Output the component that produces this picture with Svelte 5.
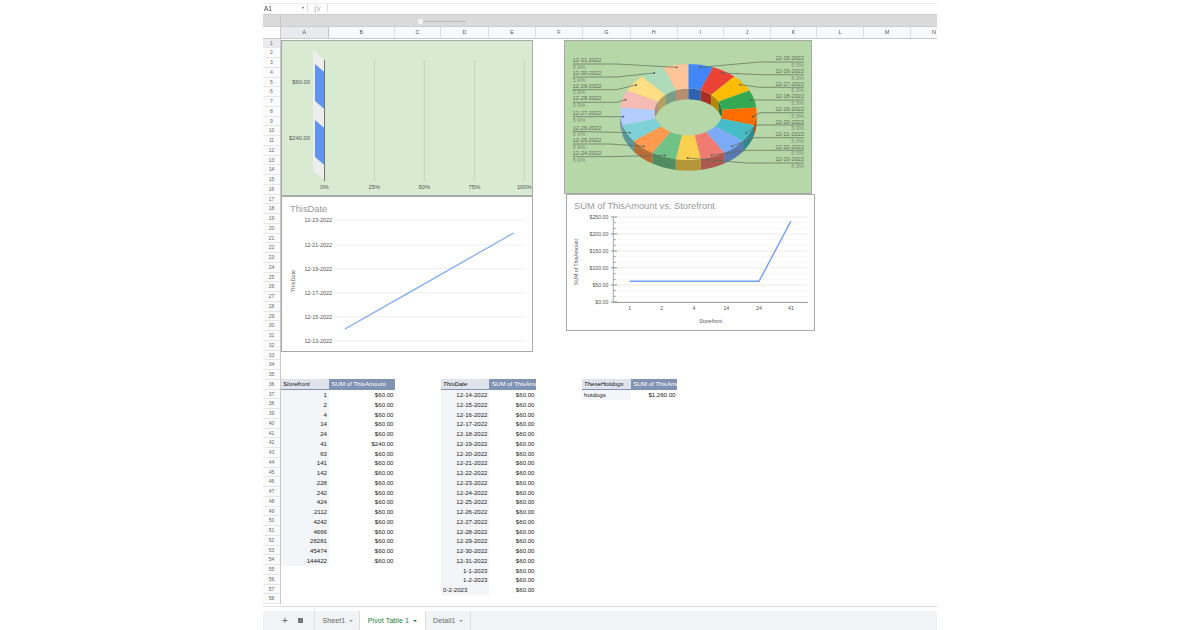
<script>
  const columns = [
    ["A", 47.5], ["B", 66.5], ["C", 46], ["D", 48], ["E", 47], ["F", 47], ["G", 48],
    ["H", 46.5], ["I", 46.5], ["J", 47], ["K", 46], ["L", 47], ["M", 47], ["N", 47],
  ];
  const rowNumbers = Array.from({ length: 58 }, (_, i) => i + 1);

  // pivot tables
  const stores = [1, 2, 4, 14, 24, 41, 63, 141, 142, 228, 242, 424, 2112, 4242, 4666, 28281, 45474, 144422];
  const dates = [];
  for (let d = 14; d <= 31; d++) dates.push(`12-${d}-2022`);
  dates.push("1-1-2023", "1-2-2023", "0-2-2023");

  const tables = [
    {
      head: "Storefront", w1: 47.5, w2: 66.5,
      rows: stores.map((s) => ({ key: s, val: s === 41 ? "$240.00" : "$60.00" })),
    },
    {
      head: "ThisDate", w1: 48, w2: 47,
      rows: dates.map((d) => ({ key: d, val: "$60.00", left: d === "0-2-2023" })),
    },
    {
      head: "TheseHotdogs", w1: 48.5, w2: 46.5,
      rows: [{ key: "hotdogs", val: "$1,260.00", left: true }],
    },
  ];

  // donut chart
  const sliceColors = [
    "#4285f4", "#ea4335", "#fbbc04", "#34a853", "#ff6d01", "#46bdc6", "#7baaf7", "#f07b72", "#fcd04f",
    "#71c287", "#ff994d", "#7ed1d7", "#b3cefb", "#f7bbb6", "#fdde83", "#aedcba", "#ffc599",
  ];
  const cx = 688.3, cy = 112, rx = 68.3, ry = 48, irx = 34, iry = 23.5, depth = 10.7;
  const step = 360 / 17;

  function pt(a, x, y, dy = 0) {
    const r = (a * Math.PI) / 180;
    return `${(cx + x * Math.sin(r)).toFixed(2)} ${(cy + dy - y * Math.cos(r)).toFixed(2)}`;
  }
  function wall(a0, a1, x, y) {
    return `M${pt(a0, x, y)} A${x} ${y} 0 0 1 ${pt(a1, x, y)} L${pt(a1, x, y, depth)} A${x} ${y} 0 0 0 ${pt(a0, x, y, depth)} Z`;
  }
  function darken(hex) {
    const n = parseInt(hex.slice(1), 16);
    const c = [n >> 16, (n >> 8) & 255, n & 255].map((v) => Math.round(v * 0.72));
    return `rgb(${c.join(",")})`;
  }

  const slices = sliceColors.map((color, i) => {
    const a0 = i * step, a1 = (i + 1) * step;
    return {
      color,
      shade: darken(color),
      top: `M${pt(a0, rx, ry)} A${rx} ${ry} 0 0 1 ${pt(a1, rx, ry)} L${pt(a1, irx, iry)} A${irx} ${iry} 0 0 0 ${pt(a0, irx, iry)} Z`,
      outer: a1 > 90 && a0 < 270 ? wall(Math.max(a0, 90), Math.min(a1, 270), rx, ry) : null,
      inner: [
        a0 < 90 ? wall(a0, Math.min(a1, 90), irx, iry) : null,
        a1 > 270 ? wall(Math.max(a0, 270), a1, irx, iry) : null,
      ].filter(Boolean),
    };
  });

  const leftLabels = [
    ["12-31-2022", 60.3, "572.7,64 616.7,64 676.7,67.3"],
    ["12-30-2022", 73, "572.7,77 616.7,77 654.3,73"],
    ["12-29-2022", 85.7, "572.7,89.7 616.7,89.7 636,85"],
    ["12-28-2022", 98.3, "572.7,102.3 616.7,102.3 625.7,99.7"],
    ["12-27-2022", 113, "572.7,116.7 623.3,116.7"],
    ["12-26-2022", 127.7, "572.7,131.3 630,132.7"],
    ["12-25-2022", 140.3, "572.7,144 610,144 644,146.3"],
    ["12-24-2022", 153, "572.7,156.7 610,156.7 665,155.3"],
  ];
  const rightLabels = [
    ["12-15-2022", 58.3, "804,62 760,62 700,67.3"],
    ["12-16-2022", 71, "804,74.7 760,74.7 722.3,73"],
    ["12-17-2022", 83.7, "804,87.3 760,87.3 740,84.7"],
    ["12-18-2022", 96.3, "804,100 750.7,100"],
    ["12-19-2022", 109, "804,112.7 760,112.7 752.7,116.7"],
    ["12-20-2022", 121.7, "804,125 756.7,125 746,133.3"],
    ["12-21-2022", 134.3, "804,137.7 755,137.7 731.7,146.3"],
    ["12-22-2022", 146.7, "804,150.3 746.7,150.3 711.7,155.3"],
    ["12-23-2022", 159.3, "804,163 746.7,163 687.7,158"],
  ];

  // bar chart
  const barGrid = [
    [324.5, "0%"], [374.3, "25%"], [424.3, "50%"], [474.3, "75%"], [524.3, "100%"],
  ];

  // date line chart
  const dateTicks = [
    ["12-23-2022", 220.3], ["12-21-2022", 245], ["12-19-2022", 268.7],
    ["12-17-2022", 292.7], ["12-15-2022", 316.7], ["12-13-2022", 340.7],
  ];

  // amount line chart
  const amountTicks = [
    ["$250.00", 217], ["$200.00", 234], ["$150.00", 251], ["$100.00", 267.8], ["$50.00", 285], ["$0.00", 302],
  ];
  const minorTicks = [];
  for (let i = 0; i < 5; i++) {
    minorTicks.push(217 + i * 17 + 17 / 3, 217 + i * 17 + (2 * 17) / 3);
  }
  const amountCats = [["1", 629.7], ["2", 661.7], ["4", 694], ["14", 726.3], ["24", 759], ["41", 791]];
</script>

<div class="page">
  <div class="sheet">
    <div class="formula">
      <span class="cell-ref">A1</span>
      <span class="caret"></span>
      <span class="sep"></span>
      <span class="fx">fx</span>
      <span class="sep"></span>
    </div>

    <div class="band">
      <div class="band-gutter"></div>
      <div class="band-main">
        <span class="knob"></span>
        <span class="track"></span>
      </div>
    </div>

    <div class="col-head">
      <div class="corner"></div>
      {#each columns as [name, w], i}
        <div class="col" class:active={i === 0} style:width="{w}px">{name}</div>
      {/each}
    </div>

    <div class="body">
      <div class="row-head">
        {#each rowNumbers as n}
          <div class="row-num" class:active={n === 1}>{n}</div>
        {/each}
      </div>

      <div class="canvas">
        <div class="tables">
          {#each tables as t}
            <div class="pivot" style:grid-template-columns="{t.w1}px {t.w2}px">
              <div class="th key">{t.head}</div>
              <div class="th sum">SUM of ThisAmount</div>
              {#each t.rows as r}
                <div class="td key" class:left={r.left}>{r.key}</div>
                <div class="td">{r.val}</div>
              {/each}
            </div>
          {/each}
        </div>

        <!-- charts float over the cells -->
        <svg class="chart bar" viewBox="281 40 252 156">
          <polygon points="313,49.3 324.3,60 324.3,181 313,170" fill="#eeeeee" />
          <polygon points="315,64 324.3,72 324.3,109 315,101" fill="#5f95f0" />
          <polygon points="315,120 324.3,128 324.3,165 315,157" fill="#5f95f0" />
          {#each barGrid as [x, label], i}
            <line x1={x} x2={x} y1="60" y2="181" stroke={i === 0 ? "#666" : "#bfd0b8"} stroke-width="0.9" />
            <text x={x} y="188.5" text-anchor="middle" class="tick">{label}</text>
          {/each}
          <text x="310" y="83.5" text-anchor="end" class="tick">$60.00</text>
          <text x="310" y="139.5" text-anchor="end" class="tick">$240.00</text>
        </svg>

        <svg class="chart donut" viewBox="564 40 248 154">
          <defs>
            <clipPath id="hole">
              <ellipse cx={cx} cy={cy} rx={irx} ry={iry} />
            </clipPath>
          </defs>
          <g clip-path="url(#hole)">
            {#each slices as s}
              {#each s.inner as d}
                <path d={d} fill={s.shade} />
              {/each}
            {/each}
          </g>
          {#each slices as s}
            {#if s.outer}<path d={s.outer} fill={s.shade} />{/if}
          {/each}
          {#each slices as s}
            <path d={s.top} fill={s.color} />
          {/each}

          {#each [...leftLabels, ...rightLabels] as [, , pts]}
            <polyline points={pts} fill="none" stroke="#5f6b5a" stroke-width="0.7" />
            <circle cx={pts.split(" ").at(-1).split(",")[0]} cy={pts.split(" ").at(-1).split(",")[1]} r="0.9" fill="#555" />
          {/each}
          {#each leftLabels as [date, y]}
            <text x="572.7" y={y + 2} class="lab">{date}</text>
            <text x="572.7" y={y + 8.6} class="pct">5.9%</text>
          {/each}
          {#each rightLabels as [date, y]}
            <text x="804" y={y + 2} text-anchor="end" class="lab">{date}</text>
            <text x="804" y={y + 8.6} text-anchor="end" class="pct">5.9%</text>
          {/each}
        </svg>

        <svg class="chart dates" viewBox="281 196 252 156">
          <text x="290" y="212" class="title">ThisDate</text>
          {#each dateTicks as [label, y]}
            <line x1="335" x2="525" y1={y} y2={y} stroke="#eeeeee" />
            <text x="332" y={y + 2} text-anchor="end" class="tick date">{label}</text>
          {/each}
          <line x1="345" y1="329" x2="513.7" y2="233" stroke="#7fadf8" stroke-width="1.4" />
          <text transform="translate(294.5 281) rotate(-90)" text-anchor="middle" class="axis">ThisDate</text>
        </svg>

        <svg class="chart amount" viewBox="566 194 249 137">
          <text x="574" y="209" class="title">SUM of ThisAmount vs. Storefront</text>
          {#each minorTicks as y}
            <line x1="613.3" x2="807.7" y1={y} y2={y} stroke="#f3f3f3" stroke-width="0.7" />
            <line x1="613.3" x2="616" y1={y} y2={y} stroke="#777" stroke-width="0.6" />
          {/each}
          {#each amountTicks as [label, y]}
            <line x1="613.3" x2="807.7" y1={y} y2={y} stroke="#e2e2e2" stroke-width="0.7" />
            <line x1="611" x2="617" y1={y} y2={y} stroke="#666" stroke-width="0.7" />
            <text x="608.3" y={y + 2} text-anchor="end" class="small">{label}</text>
          {/each}
          <line x1="613.3" x2="613.3" y1="217" y2="302" stroke="#888" stroke-width="0.7" />
          <line x1="613.3" x2="807.7" y1="302.5" y2="302.5" stroke="#888" stroke-width="0.8" />
          {#each amountCats as [label, x]}
            <text x={x} y="309.5" text-anchor="middle" class="small">{label}</text>
          {/each}
          <polyline points="629.7,281.3 759,281.3 791,221" fill="none" stroke="#6fa1f5" stroke-width="1.4" />
          <text x="710.7" y="323.3" text-anchor="middle" class="small">Storefront</text>
          <text transform="translate(578 262) rotate(-90)" text-anchor="middle" class="small">SUM of ThisAmount</text>
        </svg>
      </div>
    </div>

    <div class="scroll"></div>

    <div class="tabs">
      <span class="plus">+</span>
      <span class="list"></span>
      <div class="tab first">Sheet1<i></i></div>
      <div class="tab current">Pivot Table 1<i></i></div>
      <div class="tab">Detail1<i></i></div>
    </div>
  </div>
</div>

<style>
  :global(body) {
    background: #fff;
  }

  .page {
    width: 1200px;
    height: 630px;
    display: flex;
    justify-content: center;
    overflow: hidden;
    font-family: "Liberation Sans", Arial, sans-serif;
    color: #222;
  }

  .sheet {
    width: 674px;
    height: 630px;
    padding-top: 3px;
    box-sizing: border-box;
    display: flex;
    flex-direction: column;
    overflow: hidden;
    filter: blur(0.45px);
  }

  .formula {
    height: 11px;
    flex: none;
    border-top: 1px solid #eee;
    padding-bottom: 2px;
    box-sizing: border-box;
    display: flex;
    align-items: center;
    font-size: 6.5px;
  }
  .cell-ref {
    width: 38px;
    padding-left: 1px;
    color: #444;
  }
  .caret {
    border: 1.5px solid transparent;
    border-top: 2px solid #666;
    border-bottom: none;
    margin-right: 3px;
  }
  .sep {
    width: 1px;
    height: 8px;
    background: #ddd;
  }
  .fx {
    width: 19px;
    text-align: center;
    font-family: "Liberation Serif", serif;
    font-style: italic;
    font-size: 9px;
    color: #aaa;
  }

  .band {
    height: 13px;
    flex: none;
    display: flex;
    background: #dadada;
    border-top: 1px solid #ccc;
    box-sizing: border-box;
  }
  .band-gutter {
    width: 18px;
    flex: none;
    border-right: 1px solid #c8c8c8;
    box-sizing: border-box;
  }
  .band-main {
    flex: 1;
    display: flex;
    align-items: center;
    padding-left: 137px;
  }
  .knob {
    width: 5px;
    height: 5px;
    background: #f4f4f4;
    border-radius: 1px;
  }
  .track {
    width: 43px;
    height: 1px;
    background: #bbb;
  }

  .col-head {
    height: 10.6px;
    flex: none;
    display: flex;
    background: #f8f9fa;
    border-top: 1px solid #ccc;
    border-bottom: 1px solid #ccc;
    margin-top: -1px;
    overflow: hidden;
  }
  .corner {
    width: 18px;
    flex: none;
    background: #fff;
    border-right: 1px solid #c8c8c8;
    box-sizing: border-box;
  }
  .col {
    flex: none;
    box-sizing: border-box;
    border-right: 1px solid #ddd;
    font-size: 5.5px;
    line-height: 10.6px;
    text-align: center;
    color: #555;
  }
  .col.active {
    background: #e8eaed;
    border-right-color: #c4c4c4;
  }

  .body {
    flex: none;
    height: 565.5px;
    display: flex;
  }
  .row-head {
    width: 18px;
    flex: none;
    background: #fbfbfb;
    border-right: 1px solid #c8c8c8;
    box-sizing: border-box;
  }
  .row-num {
    height: 9.75px;
    box-sizing: border-box;
    border-bottom: 1px solid #e6e6e6;
    font-size: 5px;
    line-height: 9px;
    text-align: center;
    color: #666;
  }
  .row-num.active {
    background: #e8eaed;
  }

  .canvas {
    flex: 1;
    position: relative;
    overflow: hidden;
    background: #fff;
  }

  .tables {
    display: flex;
    align-items: flex-start;
    gap: 46px;
    padding-top: 340.6px;
  }
  .pivot {
    display: grid;
    grid-template-rows: 11px;
    grid-auto-rows: 9.75px;
    font-size: 6.1px;
    line-height: 9.75px;
    color: #222;
  }
  .th {
    line-height: 10px;
    padding: 0 1px 0 2px;
    white-space: nowrap;
    overflow: hidden;
    border-bottom: 1px solid #7e92b4;
  }
  .th.key {
    background: #dfe3eb;
    font-style: italic;
    color: #111;
  }
  .th.sum {
    background: #8093b3;
    color: #fff;
    padding-left: 3px;
  }
  .td {
    padding-right: 1.5px;
    text-align: right;
    white-space: nowrap;
  }
  .td.key {
    background: #f3f5f9;
  }
  .td.left {
    text-align: left;
    padding-left: 2px;
  }

  .chart {
    position: absolute;
    display: block;
    box-sizing: border-box;
    outline: 1px solid #aaa;
    outline-offset: -1px;
  }
  .chart.bar {
    left: 0;
    top: 1.4px;
    width: 252px;
    height: 156px;
    background: #d9ead3;
  }
  .chart.dates {
    left: 0;
    top: 157.4px;
    width: 252px;
    height: 156px;
    background: #fff;
  }
  .chart.amount {
    left: 285px;
    top: 155.4px;
    width: 249px;
    height: 137px;
    background: #fff;
  }
  .chart.donut {
    left: 283px;
    top: 1.4px;
    width: 248px;
    height: 154px;
    background: #b6d7a8;
  }

  text {
    font-family: "Liberation Sans", Arial, sans-serif;
  }
  .tick {
    font-size: 5.8px;
    fill: #555;
  }
  .tick.date {
    font-size: 5.4px;
  }
  .small {
    font-size: 5.2px;
    fill: #555;
  }
  .axis {
    font-size: 5.5px;
    fill: #666;
  }
  .title {
    font-size: 9.3px;
    fill: #999;
  }
  .lab {
    font-size: 5.6px;
    fill: #5d6a57;
  }
  .pct {
    font-size: 5.6px;
    fill: #7f8f78;
  }

  .scroll {
    flex: none;
    height: 4.5px;
    margin-top: 1.5px;
    border-top: 1px solid #ddd;
    background: #fff;
  }

  .tabs {
    flex: 1;
    display: flex;
    align-items: stretch;
    background: #f1f3f4;
    font-size: 7px;
    letter-spacing: 0.1px;
    color: #666;
  }
  .plus {
    align-self: center;
    width: 10px;
    margin-left: 17px;
    font-size: 10px;
    line-height: 10px;
    text-align: center;
    color: #666;
  }
  .list {
    align-self: center;
    width: 5px;
    height: 5px;
    margin: 0 11.5px 0 7.5px;
    background: #777;
  }
  .tab {
    display: flex;
    align-items: center;
    gap: 3.5px;
    padding: 0 6.5px 0 7.5px;
    border-right: 1px solid #ddd;
    white-space: nowrap;
  }
  .tab.first {
    border-left: 1px solid #ddd;
  }
  .tab.current {
    background: #fff;
    color: #188038;
    padding-right: 8px;
  }
  .tab i {
    border: 2px solid transparent;
    border-top: 2.5px solid #999;
    border-bottom: none;
  }
  .tab.current i {
    border-top-color: #188038;
  }
</style>
